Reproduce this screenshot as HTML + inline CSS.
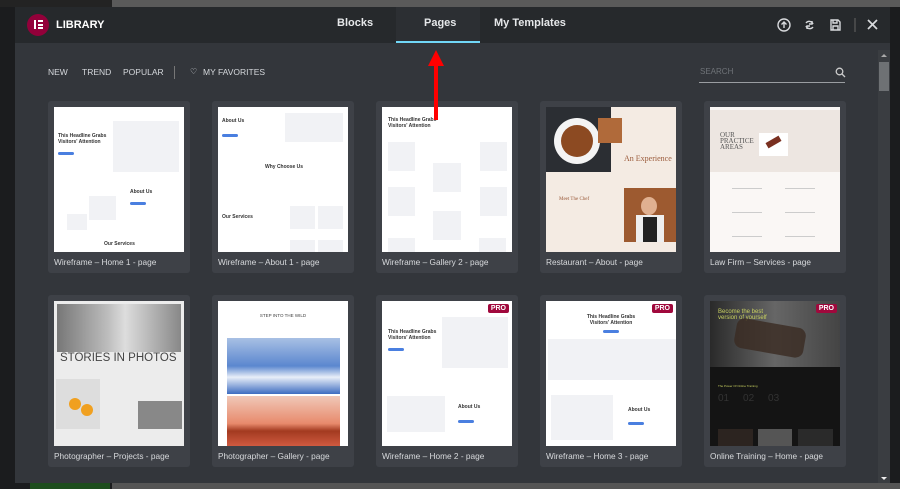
<!DOCTYPE html>
<html><head><meta charset="utf-8">
<style>
*{margin:0;padding:0;box-sizing:border-box}
body{width:900px;height:489px;overflow:hidden;background:#1b1c1e;font-family:"Liberation Sans",sans-serif;position:relative}
.a{position:absolute}
.topbg{left:112px;top:0;width:788px;height:7px;background:#5a5a5a}
.modal{left:15px;top:7px;width:875px;height:476px;background:#33363b}
.hdr{left:0;top:0;width:875px;height:36px;background:#26292c}
.tab{top:10px;color:#e6e8ea;font-size:11px;font-weight:bold}
.flt{top:60px;color:#d5d8dc;font-size:8.5px}
.card{width:142px;height:172px;background:#3e4147;border-radius:3px}
.img{left:6px;top:6px;width:130px;height:145px;background:#fff;overflow:hidden}
.lbl{left:6px;top:156px;color:#d8dadd;font-size:8.3px;white-space:nowrap}
.ph{position:absolute;background:#f1f2f5}
.t{position:absolute;font-weight:bold;color:#333;font-size:5px;line-height:6px}
.btn{position:absolute;height:3px;width:16px;background:#4a7fe0;border-radius:2px}
.pro{position:absolute;right:3px;top:3px;background:#a0083c;color:#fff;font-size:7px;font-weight:bold;padding:1px 3px;border-radius:2px}
.ln{position:absolute;height:1px;background:#ccc}
</style></head><body>
<div class="a topbg"></div>
<div class="a" style="left:0;top:0;width:112px;height:7px;background:#232323"></div>
<div class="a" style="left:30px;top:483px;width:80px;height:6px;background:#1d4d1d"></div>
<div class="a" style="left:112px;top:483px;width:788px;height:6px;background:#555"></div>
<div class="a modal">
 <div class="a hdr">
  <div class="a" style="left:12px;top:7px;width:22px;height:22px;border-radius:50%;background:#93003a"></div>
  <div class="a" style="left:19px;top:13px;width:2px;height:9px;background:#fff"></div>
  <div class="a" style="left:23px;top:13px;width:5px;height:2px;background:#fff"></div>
  <div class="a" style="left:23px;top:16.5px;width:5px;height:2px;background:#fff"></div>
  <div class="a" style="left:23px;top:20px;width:5px;height:2px;background:#fff"></div>
  <div class="a" style="left:41px;top:12px;color:#fff;font-size:11px;font-weight:bold">LIBRARY</div>
  <div class="a tab" style="left:322px">Blocks</div>
  <div class="a" style="left:381px;top:0;width:84px;height:36px;background:#2c2f33"></div>
  <div class="a tab" style="left:409px">Pages</div>
  <div class="a" style="left:381px;top:34px;width:84px;height:2px;background:#71d7f7"></div>
  <div class="a tab" style="left:479px">My Templates</div>
  <svg class="a" style="left:760px;top:9px" width="110" height="18" viewBox="0 0 110 18" fill="none" stroke="#d8dadd" stroke-width="1.4">
   <circle cx="9" cy="9" r="6"/><path d="M9 12V6M6.5 8.5L9 6l2.5 2.5"/>
   <path d="M31 7a4 4 0 0 1 7 1M38 11a4 4 0 0 1-7-1M37 5v3h-3M32 13v-3h3"/>
   <path d="M56 4h7l2 2v8h-9zM58 4v3h4V4M58 14v-4h5v4"/>
   <path d="M80 2v14" stroke="#555"/>
   <path d="M93 4l9 9M102 4l-9 9" stroke-width="1.7"/>
  </svg>
 </div>
 <div class="a flt" style="left:33px">NEW</div>
 <div class="a flt" style="left:67px">TREND</div>
 <div class="a flt" style="left:108px">POPULAR</div>
 <div class="a" style="left:159px;top:59px;width:1px;height:13px;background:#777"></div>
 <div class="a flt" style="left:175px;font-size:8px">♡</div>
 <div class="a flt" style="left:188px">MY FAVORITES</div>
 <div class="a" style="left:685px;top:60px;color:#6f7378;font-size:8px">SEARCH</div>
 <div class="a" style="left:684px;top:75px;width:146px;height:1px;background:#9a9da1"></div>
 <svg class="a" style="left:820px;top:60px" width="11" height="11" fill="none" stroke="#ccc" stroke-width="1.3"><circle cx="4.5" cy="4.5" r="3.3"/><path d="M7 7l3 3"/></svg>
 <div class="a" style="left:863px;top:43px;width:12px;height:433px;background:#3a3d41"></div>
 <div class="a" style="left:864px;top:55px;width:10px;height:29px;background:#6e7174"></div>
 <div class="a" style="left:866px;top:47px;width:0;height:0;border-left:3px solid transparent;border-right:3px solid transparent;border-bottom:3px solid #aaa"></div>
 <div class="a" style="left:866px;top:470px;width:0;height:0;border-left:3px solid transparent;border-right:3px solid transparent;border-top:3px solid #eee"></div>

 <div class="a card" style="left:33px;top:94px"><div class="a img">
  <div class="t" style="left:4px;top:26px">This Headline Grabs<br>Visitors' Attention</div><div class="btn" style="left:4px;top:45px"></div>
  <div class="ph" style="left:59px;top:14px;width:66px;height:51px"></div>
  <div class="ph" style="left:35px;top:89px;width:27px;height:24px"></div><div class="ph" style="left:13px;top:107px;width:20px;height:16px"></div>
  <div class="t" style="left:76px;top:82px">About Us</div><div class="btn" style="left:76px;top:95px"></div>
  <div class="t" style="left:50px;top:134px">Our Services</div>
 </div><div class="a lbl">Wireframe – Home 1 - page</div></div>

 <div class="a card" style="left:197px;top:94px"><div class="a img">
  <div class="t" style="left:4px;top:11px">About Us</div><div class="btn" style="left:4px;top:27px"></div>
  <div class="ph" style="left:67px;top:6px;width:58px;height:29px"></div>
  <div class="t" style="left:47px;top:57px">Why Choose Us</div>
  <div class="t" style="left:4px;top:107px">Our Services</div>
  <div class="ph" style="left:72px;top:99px;width:25px;height:23px"></div><div class="ph" style="left:100px;top:99px;width:25px;height:23px"></div>
  <div class="ph" style="left:72px;top:133px;width:25px;height:12px"></div><div class="ph" style="left:100px;top:133px;width:25px;height:12px"></div>
 </div><div class="a lbl">Wireframe – About 1 - page</div></div>

 <div class="a card" style="left:361px;top:94px"><div class="a img">
  <div class="t" style="left:6px;top:10px">This Headline Grabs<br>Visitors' Attention</div>
  <div class="ph" style="left:6px;top:35px;width:27px;height:29px"></div><div class="ph" style="left:98px;top:35px;width:27px;height:29px"></div>
  <div class="ph" style="left:51px;top:56px;width:28px;height:29px"></div>
  <div class="ph" style="left:6px;top:80px;width:27px;height:29px"></div><div class="ph" style="left:98px;top:80px;width:27px;height:29px"></div>
  <div class="ph" style="left:51px;top:104px;width:28px;height:29px"></div>
  <div class="ph" style="left:6px;top:131px;width:27px;height:14px"></div><div class="ph" style="left:97px;top:131px;width:27px;height:14px"></div>
 </div><div class="a lbl">Wireframe – Gallery 2 - page</div></div>

 <div class="a card" style="left:525px;top:94px"><div class="a img" style="background:#f4ebe3">
  <div class="a" style="left:0;top:0;width:65px;height:65px;background:#2b2e33"></div>
  <div class="a" style="left:8px;top:11px;width:46px;height:46px;border-radius:50%;background:#f4f4f4"></div>
  <div class="a" style="left:15px;top:18px;width:32px;height:32px;border-radius:50%;background:#8c4a22"></div>
  <div class="a" style="left:52px;top:11px;width:24px;height:25px;background:#b06a3a"></div>
  <div class="a" style="left:78px;top:47px;color:#9a5a3a;font-family:'Liberation Serif',serif;font-size:8px">An Experience</div>
  <div class="a" style="left:13px;top:90px;color:#9a5a3a;font-family:'Liberation Serif',serif;font-size:5px">Meet The Chef</div>
  <div class="a" style="left:78px;top:81px;width:52px;height:54px;background:#9d5a30"></div>
  <div class="a" style="left:95px;top:90px;width:16px;height:18px;border-radius:50%;background:#e0b090"></div>
  <div class="a" style="left:90px;top:108px;width:28px;height:27px;background:#eee"></div>
  <div class="a" style="left:97px;top:110px;width:14px;height:25px;background:#222"></div>
 </div><div class="a lbl">Restaurant – About - page</div></div>

 <div class="a card" style="left:689px;top:94px"><div class="a img" style="background:#faf7f5">
  <div class="a" style="left:0;top:3px;width:130px;height:62px;background:#ede6e1"></div>
  <div class="a" style="left:10px;top:25px;color:#555;font-family:'Liberation Serif',serif;font-size:7px;line-height:6px">OUR<br>PRACTICE<br>AREAS</div>
  <div class="a" style="left:49px;top:26px;width:29px;height:23px;background:#fff"></div>
  <div class="a" style="left:56px;top:32px;width:15px;height:6px;background:#7a3020;transform:rotate(-30deg)"></div>
  <div class="ln" style="left:22px;top:81px;width:30px"></div><div class="ln" style="left:75px;top:81px;width:30px"></div>
  <div class="ln" style="left:22px;top:105px;width:30px"></div><div class="ln" style="left:75px;top:105px;width:30px"></div>
  <div class="ln" style="left:22px;top:129px;width:30px"></div><div class="ln" style="left:75px;top:129px;width:30px"></div>
 </div><div class="a lbl">Law Firm – Services - page</div></div>

 <div class="a card" style="left:33px;top:288px"><div class="a img" style="background:#ececec">
  <div class="a" style="left:3px;top:3px;width:124px;height:48px;background:linear-gradient(90deg,#777,#bbb 40%,#ddd 55%,#888)"></div>
  <div class="a" style="left:6px;top:51px;color:#444;font-size:11.5px;white-space:nowrap">STORIES IN PHOTOS</div>
  <div class="a" style="left:2px;top:78px;width:44px;height:50px;background:#ddd"></div>
  <div class="a" style="left:15px;top:97px;width:12px;height:12px;border-radius:50%;background:#f0a020"></div>
  <div class="a" style="left:27px;top:103px;width:12px;height:12px;border-radius:50%;background:#f0a020"></div>
  <div class="a" style="left:84px;top:100px;width:44px;height:28px;background:#888"></div>
 </div><div class="a lbl">Photographer – Projects - page</div></div>

 <div class="a card" style="left:197px;top:288px"><div class="a img">
  <div class="a" style="left:0;top:12px;width:130px;text-align:center;font-size:4.5px;color:#444">STEP INTO THE WILD</div>
  <div class="a" style="left:9px;top:37px;width:113px;height:56px;background:linear-gradient(180deg,#a8c0e4,#5b87cf 50%,#e8eef8 70%,#3d6cc0)"></div>
  <div class="a" style="left:9px;top:95px;width:113px;height:50px;background:linear-gradient(180deg,#f0c8b8,#e88a6c 55%,#a33a20 70%,#d05a40)"></div>
 </div><div class="a lbl">Photographer – Gallery - page</div></div>

 <div class="a card" style="left:361px;top:288px"><div class="a img">
  <div class="t" style="left:6px;top:28px">This Headline Grabs<br>Visitors' Attention</div><div class="btn" style="left:6px;top:47px"></div>
  <div class="ph" style="left:60px;top:16px;width:66px;height:51px"></div>
  <div class="ph" style="left:5px;top:95px;width:58px;height:36px"></div>
  <div class="t" style="left:76px;top:103px">About Us</div><div class="btn" style="left:76px;top:119px"></div>
  <div class="pro">PRO</div>
 </div><div class="a lbl">Wireframe – Home 2 - page</div></div>

 <div class="a card" style="left:525px;top:288px"><div class="a img">
  <div class="t" style="left:0;width:130px;text-align:center;top:13px">This Headline Grabs<br>Visitors' Attention</div><div class="btn" style="left:57px;top:29px"></div>
  <div class="ph" style="left:2px;top:38px;width:128px;height:41px"></div>
  <div class="ph" style="left:5px;top:94px;width:62px;height:45px"></div>
  <div class="t" style="left:82px;top:106px">About Us</div><div class="btn" style="left:82px;top:121px"></div>
  <div class="pro">PRO</div>
 </div><div class="a lbl">Wireframe – Home 3 - page</div></div>

 <div class="a card" style="left:689px;top:288px"><div class="a img" style="background:#141414">
  <div class="a" style="left:0;top:0;width:130px;height:66px;background:linear-gradient(90deg,#2a2a2a,#666 50%,#444)"></div>
  <div class="a" style="left:8px;top:8px;color:#c8d060;font-size:6px;line-height:6px">Become the best<br>version of yourself</div>
  <div class="a" style="left:25px;top:22px;width:70px;height:30px;background:#3a2a22;transform:rotate(10deg);border-radius:8px;opacity:.8"></div>
  <div class="a" style="left:8px;top:83px;color:#c8d060;font-size:3px">The Power Of Online Training</div>
  <div class="a" style="left:8px;top:92px;color:#333;font-size:10px">01&nbsp;&nbsp;&nbsp;&nbsp;&nbsp;02&nbsp;&nbsp;&nbsp;&nbsp;&nbsp;03</div>
  <div class="a" style="left:8px;top:128px;width:35px;height:17px;background:#2c2420"></div>
  <div class="a" style="left:48px;top:128px;width:34px;height:17px;background:#555"></div>
  <div class="a" style="left:88px;top:128px;width:35px;height:17px;background:#2a2a2a"></div>
  <div class="pro">PRO</div>
 </div><div class="a lbl">Online Training – Home - page</div></div>
</div>
<div class="a" style="left:434px;top:62px;width:4px;height:58px;background:#f00"></div>
<div class="a" style="left:428px;top:50px;width:0;height:0;border-left:8px solid transparent;border-right:8px solid transparent;border-bottom:16px solid #f00"></div>
</body></html>
